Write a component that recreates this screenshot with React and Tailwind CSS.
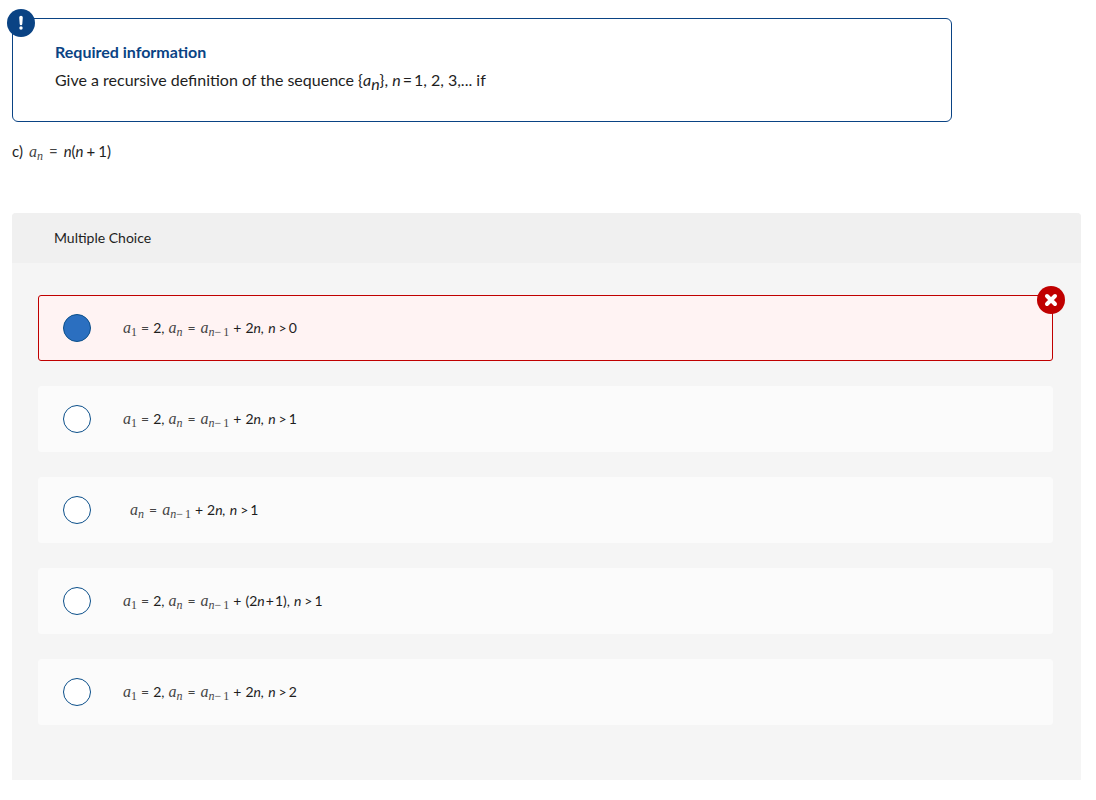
import { useState } from "react";

const INCORRECT_CHOICE = 0;

function Sub({ base, children }) {
  return (
    <span className="font-['Liberation_Serif',serif] text-base leading-none text-[#444]">
      <i>{base}</i>
      <sub className="bottom-auto top-[3px] text-xs leading-none">{children}</sub>
    </span>
  );
}

// a_n = a_{n-1} +
function Recurrence() {
  return (
    <>
      <Sub base="a"><i>n</i></Sub>
      <span className="mx-[5px] text-[#444]">=</span>
      <Sub base="a">
        <i>n</i>−<span className="ml-[2px]">1</span>
      </Sub>
      <span className="mx-1">+</span>
    </>
  );
}

function FirstTerm() {
  return (
    <>
      <Sub base="a">1</Sub>
      <span className="mx-1 text-[#444]">=</span>
      <span className="mr-1">2,</span>
    </>
  );
}

function Bound({ value }) {
  return (
    <>
      <i className="ml-1">n</i>
      <span className="ml-[3px] mr-[2px]">&gt;</span>
      {value}
    </>
  );
}

const choices = [
  { first: true, term: <>2<i>n,</i></>, bound: 0 },
  { first: true, term: <>2<i>n,</i></>, bound: 1 },
  { first: false, term: <>2<i>n,</i></>, bound: 1 },
  { first: true, term: <>(2<i>n</i><span className="mx-px">+</span>1),</>, bound: 1 },
  { first: true, term: <>2<i>n,</i></>, bound: 2 },
];

export default function App() {
  const [selected, setSelected] = useState(0);

  return (
    <main className="pt-[18px] pb-5 pl-3 pr-[15px] font-['Lato',sans-serif] text-[#1e1e1e]">
      {/* Required information */}
      <section className="relative max-w-[940px] rounded-md border border-[#0a4384] px-[42px] pt-[23px] pb-[31px]">
        <span className="absolute -left-[6px] -top-[10px] flex size-7 items-center justify-center rounded-full bg-[#0a4384]">
          <svg viewBox="0 0 28 28" className="size-7" fill="white" aria-hidden="true">
            <path d="M12.2 8.5a1.8 1.8 0 0 1 3.6 0l-.5 6.4a1.3 1.3 0 0 1-2.6 0z" />
            <circle cx="14" cy="19" r="1.7" />
          </svg>
        </span>
        <h2 className="text-base leading-5 font-bold text-[#0a4384]">Required information</h2>
        <p className="mt-2 text-base leading-5">
          Give a recursive definition of the sequence {"{"}<i>a</i>
          <sub className="bottom-auto top-1 text-base leading-none"><i>n</i></sub>{"}"}, <i>n</i>
          <span className="mx-[2px]">=</span>1, 2, 3,... if
        </p>
      </section>

      <p className="mt-[19px] text-[15px] leading-5">
        <span className="mr-[6px]">c)</span>
        <Sub base="a"><i>n</i></Sub>
        <span className="mx-[6px] text-[#444]">=</span>
        <i>n</i>(<i>n</i><span className="mx-[3px]">+</span>1)
      </p>

      {/* Answers */}
      <section className="mt-[52px] rounded-t-sm bg-[#f5f5f5]">
        <h3 id="question-type" className="rounded-t-sm bg-[#f0f0f0] px-[42px] py-[15px] text-sm leading-5">
          Multiple Choice
        </h3>
        <div
          role="radiogroup"
          aria-labelledby="question-type"
          className="flex flex-col gap-[25px] pt-8 pr-7 pb-[55px] pl-[26px]"
        >
          {choices.map((choice, index) => {
            const incorrect = index === INCORRECT_CHOICE;
            return (
              <label
                key={index}
                className={`relative flex h-[66px] cursor-pointer items-center gap-8 rounded-[3px] border px-6 text-sm ${
                  incorrect ? "border-[#c00000] bg-[#fff3f3]" : "border-[#fbfbfb] bg-[#fbfbfb]"
                }`}
              >
                <input
                  type="radio"
                  name="answer"
                  checked={selected === index}
                  onChange={() => setSelected(index)}
                  className="size-7 shrink-0 appearance-none rounded-full border border-[#0b4f8a] bg-white checked:bg-[#2b6fc0]"
                />
                <span className={`whitespace-nowrap leading-5 ${choice.first ? "" : "ml-[7px]"}`}>
                  {choice.first && <FirstTerm />}
                  <Recurrence />
                  {choice.term}
                  <Bound value={choice.bound} />
                </span>
                {incorrect && (
                  <span className="absolute -right-[13px] -top-[10px] flex size-7 items-center justify-center rounded-full bg-[#c00000]">
                    <svg viewBox="0 0 28 28" className="size-7" stroke="white" strokeWidth="4" strokeLinecap="round" aria-hidden="true">
                      <path d="M10 10l8 8M18 10l-8 8" />
                    </svg>
                  </span>
                )}
              </label>
            );
          })}
        </div>
      </section>
    </main>
  );
}
